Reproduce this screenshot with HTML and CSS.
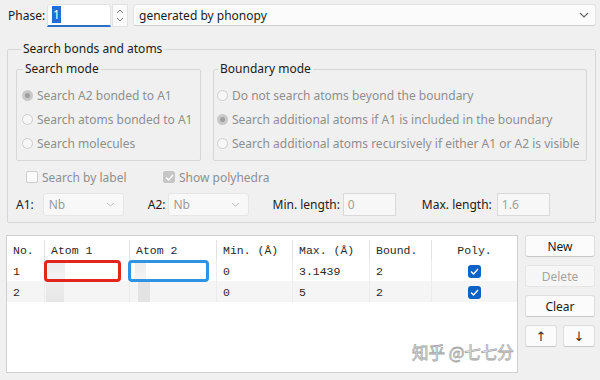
FILE: index.html
```html
<!DOCTYPE html>
<html>
<head>
<meta charset="utf-8">
<link rel="stylesheet" href="styles.css">
</head>
<body>
<div class="app">
  <div class="phase-row">
    <span class="lbl">Phase:</span>
    <div class="spin">
      <div class="spin-input"><span class="sel">1</span></div>
      <div class="spin-btns">
        <svg width="8" height="5" viewBox="0 0 8 5"><path d="M1 4 L4 1 L7 4" fill="none" stroke="#777" stroke-width="1"/></svg>
        <svg width="8" height="5" viewBox="0 0 8 5"><path d="M1 1 L4 4 L7 1" fill="none" stroke="#777" stroke-width="1"/></svg>
      </div>
    </div>
    <div class="combo phase-combo">
      <span>generated by phonopy</span>
      <svg class="chev" width="10" height="6" viewBox="0 0 10 6"><path d="M1 1 L5 5 L9 1" fill="none" stroke="#666" stroke-width="1.1"/></svg>
    </div>
  </div>

  <fieldset class="group outer">
    <legend>Search bonds and atoms</legend>
    <div class="modes">
      <fieldset class="group mode">
        <legend>Search mode</legend>
        <div class="radio on">Search A2 bonded to A1</div>
        <div class="radio">Search atoms bonded to A1</div>
        <div class="radio">Search molecules</div>
      </fieldset>
      <fieldset class="group boundary">
        <legend>Boundary mode</legend>
        <div class="radio">Do not search atoms beyond the boundary</div>
        <div class="radio on">Search additional atoms if A1 is included in the boundary</div>
        <div class="radio">Search additional atoms recursively if either A1 or A2 is visible</div>
      </fieldset>
    </div>
    <div class="checks">
      <div class="check label-check"><span class="box"></span>Search by label</div>
      <div class="check poly-check"><span class="box checked"><svg width="9" height="7" viewBox="0 0 9 7"><path d="M1 3.5 L3.5 6 L8 1" fill="none" stroke="#fff" stroke-width="1.3"/></svg></span>Show polyhedra</div>
    </div>
    <div class="atoms-row">
      <span class="lbl">A1:</span>
      <div class="combo small a1"><span>Nb</span><svg class="chev" width="9" height="5" viewBox="0 0 9 5"><path d="M1 1 L4.5 4 L8 1" fill="none" stroke="#bbb" stroke-width="1"/></svg></div>
      <span class="lbl a2lbl">A2:</span>
      <div class="combo small a2"><span>Nb</span><svg class="chev" width="9" height="5" viewBox="0 0 9 5"><path d="M1 1 L4.5 4 L8 1" fill="none" stroke="#bbb" stroke-width="1"/></svg></div>
      <span class="lbl minlbl">Min. length:</span>
      <div class="field">0</div>
      <span class="lbl maxlbl">Max. length:</span>
      <div class="field">1.6</div>
    </div>
  </fieldset>

  <div class="bottom">
    <div class="table">
      <div class="row head">
        <div class="cell">No.</div>
        <div class="cell">Atom 1</div>
        <div class="cell">Atom 2</div>
        <div class="cell">Min. (Å)</div>
        <div class="cell">Max. (Å)</div>
        <div class="cell">Bound.</div>
        <div class="cell center">Poly.</div>
      </div>
      <div class="row">
        <div class="cell">1</div>
        <div class="cell"><div class="mark red"><span class="smudge"></span></div></div>
        <div class="cell"><div class="mark blue"><span class="smudge"></span></div></div>
        <div class="cell">0</div>
        <div class="cell">3.1439</div>
        <div class="cell">2</div>
        <div class="cell center"><span class="tick"><svg width="9" height="7" viewBox="0 0 9 7"><path d="M1 3.5 L3.5 6 L8 1" fill="none" stroke="#fff" stroke-width="1.3"/></svg></span></div>
      </div>
      <div class="row alt">
        <div class="cell">2</div>
        <div class="cell"><span class="smudge s1"></span></div>
        <div class="cell"><span class="smudge s2"></span></div>
        <div class="cell">0</div>
        <div class="cell">5</div>
        <div class="cell">2</div>
        <div class="cell center"><span class="tick"><svg width="9" height="7" viewBox="0 0 9 7"><path d="M1 3.5 L3.5 6 L8 1" fill="none" stroke="#fff" stroke-width="1.3"/></svg></span></div>
      </div>
      <div class="watermark">知乎 @七七分</div>
    </div>
    <div class="buttons">
      <div class="btn">New</div>
      <div class="btn disabled">Delete</div>
      <div class="btn">Clear</div>
      <div class="arrows">
        <div class="btn arrow">↑</div>
        <div class="btn arrow">↓</div>
      </div>
    </div>
  </div>
</div>
</body>
</html>
```

FILE: styles.css
```css
* { box-sizing: border-box; }
html, body { margin: 0; padding: 0; }
body {
  width: 600px;
  height: 380px;
  background: #f0f0f0;
  font-family: "Noto Sans", "Open Sans", sans-serif;
  font-size: 12px;
  color: #1b1b1b;
  overflow: hidden;
}
.app { padding: 4px 4px 0 7px; }

.phase-row {
  display: flex;
  align-items: center;
  height: 23px;
}
.phase-row > .lbl { width: 40px; padding-left: 1px; }
.spin {
  display: flex;
  width: 81px;
  height: 23px;
  margin-right: 5px;
}
.spin-input {
  width: 65px;
  background: #fff;
  border: 1px solid #e2e2e2;
  border-bottom: 2px solid #2a6fc9;
  border-radius: 3px 3px 0 0;
  padding: 2px 0 0 4px;
  line-height: 16px;
}
.sel { background: #1f6fd6; color: #fff; padding: 0 1px; }
.spin-btns {
  width: 16px;
  margin-left: 1px;
  background: #fafafa;
  border: 1px solid #e2e2e2;
  display: flex;
  flex-direction: column;
  align-items: center;
  justify-content: space-around;
  padding: 3px 0;
}

.combo {
  display: flex;
  align-items: center;
  justify-content: space-between;
  background: #fbfbfb;
  border: 1px solid #e3e3e3;
  border-bottom-color: #cfcfcf;
  border-radius: 3px;
}
.phase-combo {
  flex: 1;
  height: 22px;
  padding: 0 6px 0 5px;
  margin-top: -1px;
}

.group {
  border: 1px solid #d7d7d7;
  border-radius: 2px;
  margin: 0;
  min-width: 0;
}
.group legend { padding: 0 2px; line-height: 16px; }
.outer {
  margin-top: 14px;
  padding: 4px 8px 5px 8px;
  height: 182px;
}
.outer > legend { margin-left: 5px; }
.modes { display: flex; gap: 12px; }
.mode { width: 185px; padding: 6px 6px 5px 5px; }
.boundary { flex: 1; padding: 6px 6px 5px 3px; }
.mode, .boundary { height: 100px; }
.mode > legend { margin-left: 1px; }
.boundary > legend { margin-left: 1px; }

.radio {
  display: flex;
  align-items: center;
  height: 24px;
  color: #8f8f8f;
  white-space: nowrap;
}
.radio::before {
  content: "";
  width: 11px;
  height: 11px;
  border-radius: 50%;
  border: 1px solid #cfcfcf;
  background: #f7f7f7;
  margin-right: 4px;
  flex: none;
  box-sizing: border-box;
}
.radio.on::before {
  border: 3px solid #c9c9c9;
  background: #9f9f9f;
}

.checks {
  display: flex;
  align-items: center;
  height: 22px;
  margin-top: 5px;
  color: #8f8f8f;
}
.check { display: flex; align-items: center; }
.label-check { margin-left: 10px; width: 137px; }
.box {
  width: 12px;
  height: 12px;
  border: 1px solid #cdcdcd;
  border-radius: 2px;
  background: #fafafa;
  margin-right: 4px;
  display: flex;
  align-items: center;
  justify-content: center;
}
.box.checked { background: #c6c6c6; border-color: #c6c6c6; }

.atoms-row {
  display: flex;
  align-items: center;
  height: 24px;
  margin-top: 4px;
}
.atoms-row .lbl { margin-right: 5px; }
.small {
  height: 23px;
  width: 81px;
  padding: 0 8px 0 5px;
  color: #9a9a9a;
  background: #f8f8f8;
  border-color: #e6e6e6;
}
.a1 { margin-left: 4px; }
.atoms-row .a2lbl { margin-left: 24px; margin-right: 2px; }
.atoms-row .minlbl { margin-left: 24px; margin-right: 3px; }
.atoms-row .maxlbl { margin-left: 26px; margin-right: 5px; }
.field {
  width: 53px;
  height: 23px;
  border: 1px solid #dadada;
  background: #f7f7f7;
  color: #a0a0a0;
  padding: 3px 4px 0;
  line-height: 16px;
}

.bottom {
  display: flex;
  margin-top: 12px;
  margin-left: -1px;
  gap: 7px;
}
.table {
  position: relative;
  width: 512px;
  height: 138px;
  background: #fff;
  border: 1px solid #cfcfcf;
  font-family: "Liberation Mono", "DejaVu Sans Mono", monospace;
  font-size: 11.5px;
  color: #2a2a2a;
}
.row {
  display: grid;
  grid-template-columns: 38px 85px 87px 76px 77px 62px 85px;
  height: 21px;
}
.row.head { height: 24px; padding-top: 4px; }
.row.alt { background: #f5f5f5; }
.cell {
  border-right: 1px solid #ececec;
  padding-left: 6px;
  display: flex;
  align-items: center;
  white-space: nowrap;
  position: relative;
}
.row:not(.head) .cell { padding-top: 1px; }
.cell:last-child { border-right: none; }
.cell.center { justify-content: center; padding-left: 0; }
.head .cell { border-right-color: #e2e2e2; }

.mark {
  width: 77px;
  height: 22px;
  margin-left: -7px;
  margin-top: -1px;
  border: 3px solid #e0261e;
  border-radius: 4px;
  display: flex;
  align-items: stretch;
  flex: none;
}
.mark.blue { border-color: #2f93e4; width: 81px; margin-left: -8px; }
.smudge {
  display: block;
  width: 17px;
  background: linear-gradient(#ececec, #f4f4f4);
  margin-left: 1px;
}
.mark.blue .smudge { width: 11px; margin-left: 4px; }
.smudge.s1 { width: 18px; height: 100%; margin-left: -5px; background: linear-gradient(#eee, #e6e6e6); }
.smudge.s2 { width: 12px; height: 100%; margin-left: 2px; background: #e3e3e3; }

.tick {
  width: 13px;
  height: 13px;
  border-radius: 3px;
  background: #0e62c5;
  display: flex;
  align-items: center;
  justify-content: center;
}

.watermark {
  position: absolute;
  left: 405px;
  top: 104px;
  white-space: nowrap;
  font-family: "Noto Sans CJK SC", sans-serif;
  font-size: 16.5px;
  color: #fff;
  -webkit-text-stroke: 0.8px #a9a9a9;
}

.buttons {
  display: flex;
  flex-direction: column;
  gap: 8px;
  width: 70px;
}
.btn {
  height: 22px;
  background: #fbfbfb;
  border: 1px solid #dedede;
  border-bottom-color: #c8c8c8;
  border-radius: 3px;
  display: flex;
  align-items: center;
  justify-content: center;
  color: #1a1a1a;
}
.btn.disabled { color: #a4a4a4; background: #f6f6f6; border-color: #e6e6e6; }
.arrows { display: flex; gap: 6px; }
.arrows .btn { flex: 1; }
.btn.arrow { font-family: "DejaVu Sans", sans-serif; font-size: 13px; color: #333; }
```
